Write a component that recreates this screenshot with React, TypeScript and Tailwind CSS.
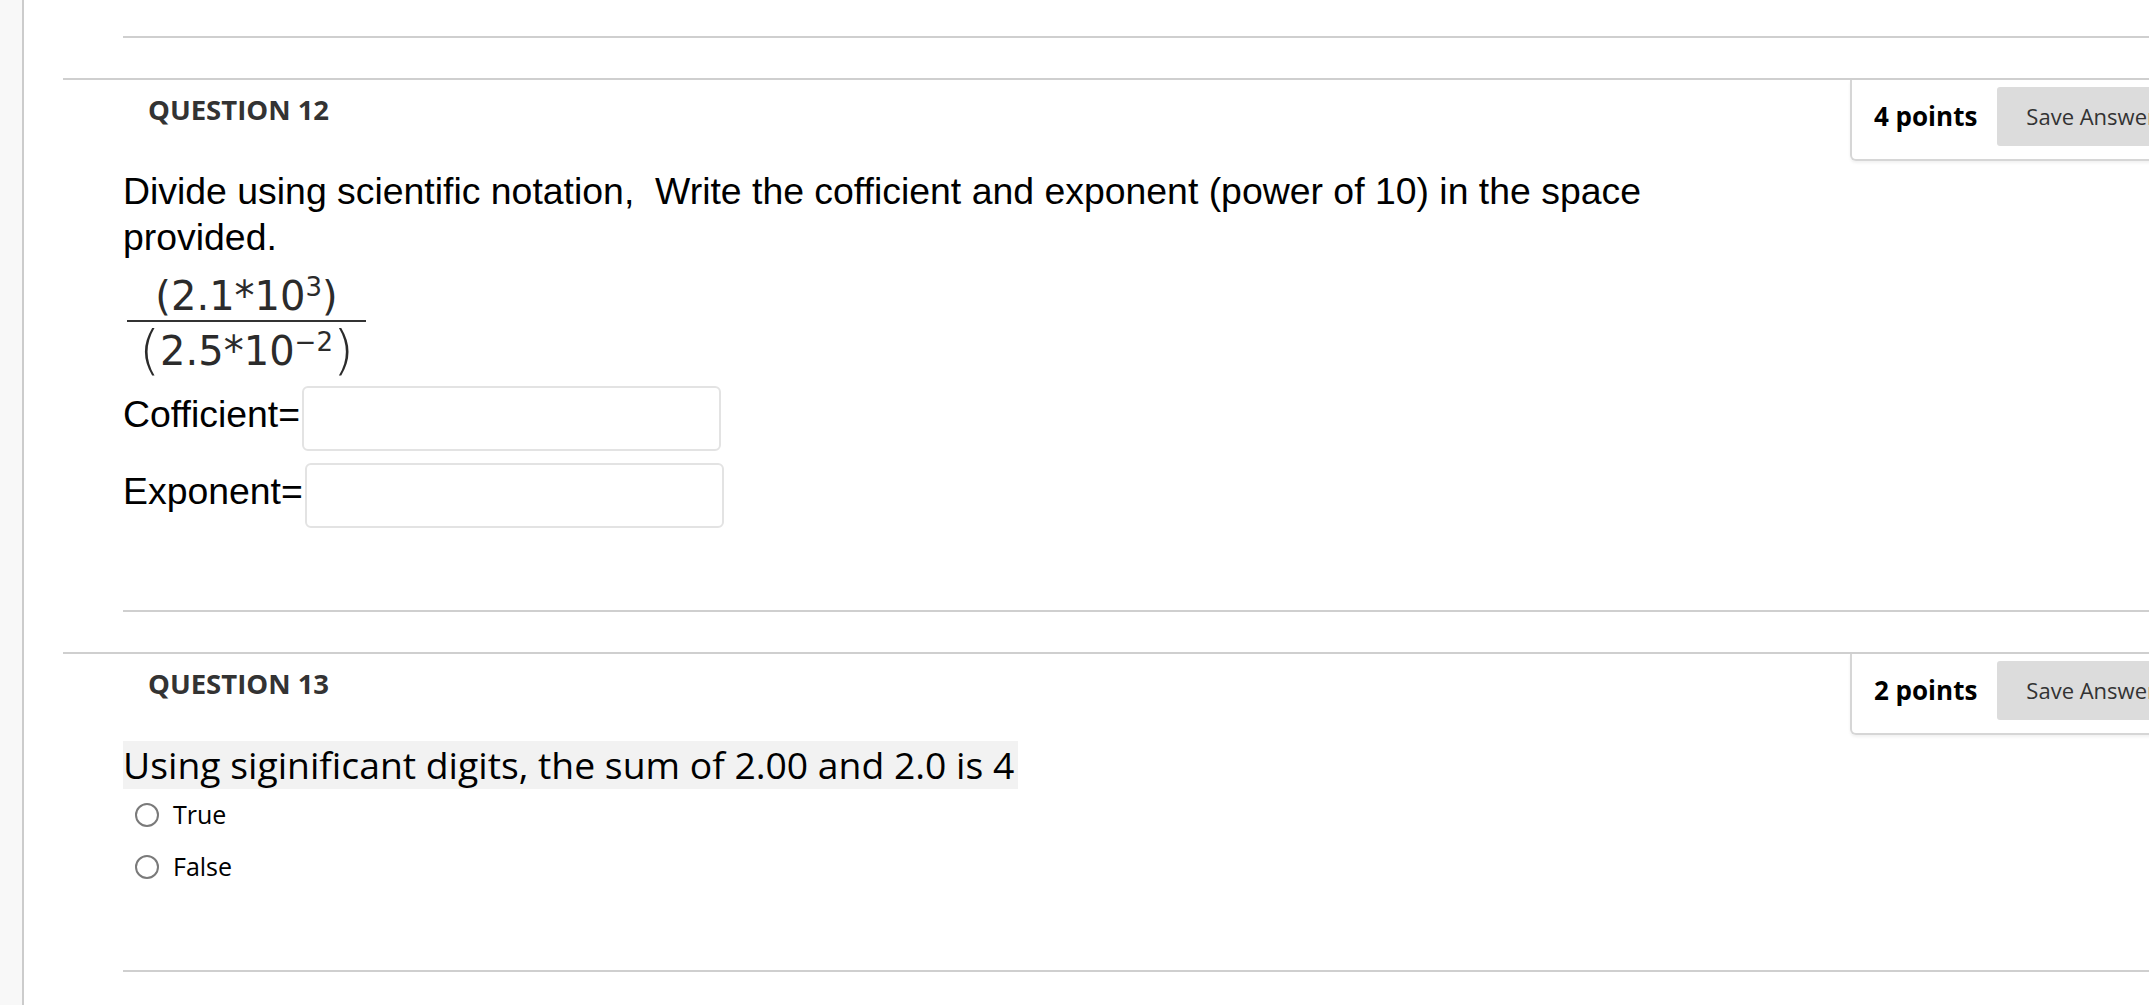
import React from "react";

const arial = { fontFamily: '"Liberation Sans", Arial, sans-serif' };

function PointsBox({ points }: { points: string }) {
  return (
    <div className="flex shrink-0 items-center gap-[20px] rounded-bl-[6px] border-2 border-t-0 border-[#d6d6d6] pb-[13px] pl-[22px] pr-[8px] pt-[7px] shadow-[0_2px_3px_rgba(0,0,0,0.06)]">
      <span className="whitespace-nowrap text-[26px] font-bold text-black">{points}</span>
      <button className="flex h-[59px] items-center whitespace-nowrap rounded-[3px] bg-[#dcdcdc] px-[29px] text-[22px] text-[#333]">
        Save Answer
      </button>
    </div>
  );
}

function Header({ title, points }: { title: string; points: string }) {
  return (
    <div className="flex items-start justify-between">
      <h2 className="pl-[85px] pt-[12px] text-[27.5px] font-bold leading-[36px] text-[#333]">{title}</h2>
      <PointsBox points={points} />
    </div>
  );
}

function Radio({ label }: { label: string }) {
  return (
    <label className="flex h-[52px] items-center">
      <span className="ml-[12px] h-[24px] w-[24px] rounded-full border-2 border-[#7a7a7a] bg-white" />
      <span className="ml-[14px] text-[25px] text-black">{label}</span>
    </label>
  );
}

export default function App() {
  return (
    <div
      className="flex h-[1005px] w-full overflow-hidden bg-white"
      style={{ fontFamily: '"Open Sans", sans-serif' }}
    >
      <div className="w-[24px] shrink-0 border-r-2 border-[#cccccc] bg-[#f8f8f8]" />
      <div className="w-[2171px] shrink-0 pl-[39px]">
        <div className="ml-[60px] mt-[36px] h-[2px] bg-[#cfcfcf]" />

        {/* Question 12 */}
        <section className="mt-[40px] w-[2132px] border-t-2 border-[#cfcfcf]">
          <Header title="QUESTION 12" points="4 points" />
          <div className="pl-[60px]">
            <p className="mt-[7px] w-[1600px] text-[37.4px] leading-[46px] text-black" style={arial}>
              Divide using scientific notation,{"\u00a0"} Write the cofficient and exponent (power of 10) in the space provided.
            </p>
            <div
              className="ml-[4px] mt-[14px] flex w-[239px] flex-col items-center text-[#2b2b2b]"
              style={{ fontFamily: '"DejaVu Sans", sans-serif' }}
            >
              <div className="flex items-center text-[40px] leading-[44px]">
                <span>(2.1*10</span>
                <span className="-mt-[18px] text-[26px] leading-[30px]">3</span>
                <span>)</span>
              </div>
              <div className="mt-[2px] h-[2px] w-full bg-[#333]" />
              <div className="flex items-center pt-[3px] text-[40px] leading-[52px]">
                <span className="text-[54px] font-extralight leading-[52px]">(</span>
                <span>2.5*10</span>
                <span className="-mt-[18px] text-[26px] leading-[30px]">−2</span>
                <span className="text-[54px] font-extralight leading-[52px]">)</span>
              </div>
            </div>

            <div className="mt-[9px] flex items-center" style={arial}>
              <span className="pb-[9px] text-[37.4px] leading-[46px] text-black">Cofficient=</span>
              <input
                type="text"
                className="ml-[2px] h-[65px] w-[419px] rounded-[6px] border-2 border-[#e3e3e3] bg-white outline-none"
              />
            </div>
            <div className="mt-[12px] flex items-center" style={arial}>
              <span className="pb-[9px] text-[37.4px] leading-[46px] text-black">Exponent=</span>
              <input
                type="text"
                className="ml-[2px] h-[65px] w-[419px] rounded-[6px] border-2 border-[#e3e3e3] bg-white outline-none"
              />
            </div>

            <div className="mt-[82px] h-[2px] bg-[#cfcfcf]" />
          </div>
        </section>

        {/* Question 13 */}
        <section className="mt-[40px] w-[2132px] border-t-2 border-[#cfcfcf]">
          <Header title="QUESTION 13" points="2 points" />
          <div className="pl-[60px]">
            <div className="mt-[6px] block w-fit bg-[#f2f2f2] pr-[4px] text-[37.3px] leading-[48px] text-black">
              Using siginificant digits, the sum of 2.00 and 2.0 is 4
            </div>
            <Radio label="True" />
            <Radio label="False" />
            <div className="mt-[77px] h-[2px] bg-[#cfcfcf]" />
          </div>
        </section>
      </div>
    </div>
  );
}
